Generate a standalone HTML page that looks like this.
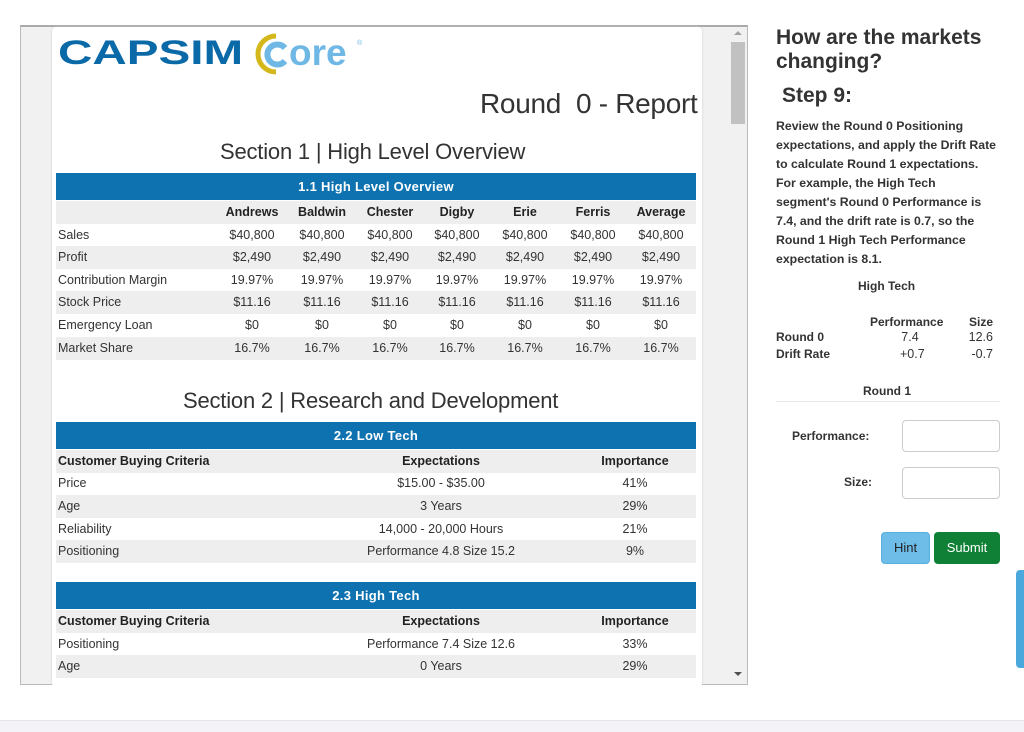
<!DOCTYPE html>
<html><head><style>
*{margin:0;padding:0;box-sizing:border-box}
body{width:1024px;height:732px;background:#fff;font-family:"Liberation Sans",sans-serif;color:#333;position:relative;overflow:hidden}
.a{position:absolute}
.frame{left:20px;top:25px;width:728px;height:660px;border:1px solid #bbb;border-top:2px solid #aaa;background:#f1f1f1;overflow:hidden}
.card{left:52px;top:27px;width:650px;height:660px;background:#fff;border-radius:4px;box-shadow:0 0 2px #ccc}
.bar{position:absolute;left:56px;width:640px;background:#0e72b0;color:#fff;font-weight:bold;font-size:13px;text-align:center;letter-spacing:.3px}
.row{position:absolute;left:56px;width:640px;height:22.7px;font-size:12.5px;line-height:22.7px}
.g{background:#eee}
.row span{position:absolute;top:0}
.c{transform:translateX(-50%);white-space:nowrap}
.h{font-weight:bold;color:#222}
.r{font-size:12px;font-weight:bold;line-height:19px;color:#333;white-space:nowrap}
</style></head><body>
<div class="a frame"></div>
<div class="a card"></div>
<div class="a" style="left:730px;top:27px;width:17px;height:657px;background:#f1f1f1"></div>
<div class="a" style="left:731px;top:42px;width:14px;height:82px;background:#c1c1c1"></div>
<div class="a" style="left:734px;top:31px;width:0;height:0;border-left:4px solid transparent;border-right:4px solid transparent;border-bottom:4px solid #a3a3a3"></div>
<div class="a" style="left:734px;top:672px;width:0;height:0;border-left:4px solid transparent;border-right:4px solid transparent;border-top:4px solid #505050"></div>
<div class="a" style="left:0;top:720px;width:1024px;height:12px;background:#f4f4f8;border-top:1px solid #e4e4ea"></div>
<div class="a" style="left:1016px;top:570px;width:10px;height:98px;background:#4aa8dc;border-radius:4px 0 0 4px"></div>

<div class="a" style="left:58px;top:33px;font-size:34px;font-weight:900;color:#0a6aa8;transform:scaleX(1.4);transform-origin:0 0;line-height:40px">CAPSIM</div>
<svg class="a" style="left:252px;top:33px" width="44" height="42"><path d="M24 3 A18 18 0 1 0 24 39" fill="none" stroke="#d4b71a" stroke-width="5"/><path d="M33 15 A10 10 0 1 0 33 28" fill="none" stroke="#6fb8e6" stroke-width="6"/></svg>
<div class="a" style="left:289px;top:31px;font-size:37px;color:#6fb8e6;font-weight:bold;line-height:44px">ore</div>
<div class="a" style="left:357px;top:40px;font-size:7px;color:#6fb8e6">®</div>

<div class="a" style="left:480px;top:88px;font-size:28px;color:#333;letter-spacing:-0.3px">Round&nbsp; 0 - Report</div>
<div class="a" style="left:220px;top:139px;font-size:22px;color:#333;letter-spacing:-0.2px">Section 1 | High Level Overview</div>
<div class="bar" style="top:173px;height:27px;line-height:27px">1.1 High Level Overview</div>

<div class="row g h" style="top:201px"><span class="c" style="left:196px">Andrews</span><span class="c" style="left:266px">Baldwin</span><span class="c" style="left:334px">Chester</span><span class="c" style="left:401px">Digby</span><span class="c" style="left:469px">Erie</span><span class="c" style="left:537px">Ferris</span><span class="c" style="left:605px">Average</span></div>
<div class="row" style="top:224px"><span style="left:2px">Sales</span><span class="c" style="left:196px">$40,800</span><span class="c" style="left:266px">$40,800</span><span class="c" style="left:334px">$40,800</span><span class="c" style="left:401px">$40,800</span><span class="c" style="left:469px">$40,800</span><span class="c" style="left:537px">$40,800</span><span class="c" style="left:605px">$40,800</span></div>
<div class="row g" style="top:246px"><span style="left:2px">Profit</span><span class="c" style="left:196px">$2,490</span><span class="c" style="left:266px">$2,490</span><span class="c" style="left:334px">$2,490</span><span class="c" style="left:401px">$2,490</span><span class="c" style="left:469px">$2,490</span><span class="c" style="left:537px">$2,490</span><span class="c" style="left:605px">$2,490</span></div>
<div class="row" style="top:269px"><span style="left:2px">Contribution Margin</span><span class="c" style="left:196px">19.97%</span><span class="c" style="left:266px">19.97%</span><span class="c" style="left:334px">19.97%</span><span class="c" style="left:401px">19.97%</span><span class="c" style="left:469px">19.97%</span><span class="c" style="left:537px">19.97%</span><span class="c" style="left:605px">19.97%</span></div>
<div class="row g" style="top:291px"><span style="left:2px">Stock Price</span><span class="c" style="left:196px">$11.16</span><span class="c" style="left:266px">$11.16</span><span class="c" style="left:334px">$11.16</span><span class="c" style="left:401px">$11.16</span><span class="c" style="left:469px">$11.16</span><span class="c" style="left:537px">$11.16</span><span class="c" style="left:605px">$11.16</span></div>
<div class="row" style="top:314px"><span style="left:2px">Emergency Loan</span><span class="c" style="left:196px">$0</span><span class="c" style="left:266px">$0</span><span class="c" style="left:334px">$0</span><span class="c" style="left:401px">$0</span><span class="c" style="left:469px">$0</span><span class="c" style="left:537px">$0</span><span class="c" style="left:605px">$0</span></div>
<div class="row g" style="top:337px"><span style="left:2px">Market Share</span><span class="c" style="left:196px">16.7%</span><span class="c" style="left:266px">16.7%</span><span class="c" style="left:334px">16.7%</span><span class="c" style="left:401px">16.7%</span><span class="c" style="left:469px">16.7%</span><span class="c" style="left:537px">16.7%</span><span class="c" style="left:605px">16.7%</span></div>

<div class="a" style="left:183px;top:388px;font-size:22px;color:#333;letter-spacing:-0.2px">Section 2 | Research and Development</div>
<div class="bar" style="top:422px;height:27px;line-height:27px">2.2 Low Tech</div>
<div class="row g h" style="top:450px"><span style="left:2px">Customer Buying Criteria</span><span class="c" style="left:385px">Expectations</span><span class="c" style="left:579px">Importance</span></div>
<div class="row" style="top:472px"><span style="left:2px">Price</span><span class="c" style="left:385px">$15.00 - $35.00</span><span class="c" style="left:579px">41%</span></div>
<div class="row g" style="top:495px"><span style="left:2px">Age</span><span class="c" style="left:385px">3 Years</span><span class="c" style="left:579px">29%</span></div>
<div class="row" style="top:518px"><span style="left:2px">Reliability</span><span class="c" style="left:385px">14,000 - 20,000 Hours</span><span class="c" style="left:579px">21%</span></div>
<div class="row g" style="top:540px"><span style="left:2px">Positioning</span><span class="c" style="left:385px">Performance 4.8 Size 15.2</span><span class="c" style="left:579px">9%</span></div>

<div class="bar" style="top:582px;height:27px;line-height:27px">2.3 High Tech</div>
<div class="row g h" style="top:610px"><span style="left:2px">Customer Buying Criteria</span><span class="c" style="left:385px">Expectations</span><span class="c" style="left:579px">Importance</span></div>
<div class="row" style="top:633px"><span style="left:2px">Positioning</span><span class="c" style="left:385px">Performance 7.4 Size 12.6</span><span class="c" style="left:579px">33%</span></div>
<div class="row g" style="top:655px"><span style="left:2px">Age</span><span class="c" style="left:385px">0 Years</span><span class="c" style="left:579px">29%</span></div>
<div class="a" style="left:20px;top:685px;width:728px;height:35px;background:#fff"></div>

<div class="a" style="left:776px;top:26px;font-size:21px;font-weight:bold;line-height:24px;color:#333">How are the markets<br>changing?</div>
<div class="a" style="left:782px;top:84px;font-size:21px;font-weight:bold;color:#333">Step 9:</div>
<div class="a r" style="left:776px;top:117px;font-size:12.3px">Review the Round 0 Positioning<br>expectations, and apply the Drift Rate<br>to calculate Round 1 expectations.<br>For example, the High Tech<br>segment's Round 0 Performance is<br>7.4, and the drift rate is 0.7, so the<br>Round 1 High Tech Performance<br>expectation is 8.1.</div>
<div class="a r" style="left:858px;top:277px">High Tech</div>
<div class="a r" style="left:870px;top:313px">Performance</div>
<div class="a r" style="left:969px;top:313px">Size</div>
<div class="a r" style="left:776px;top:329px;line-height:17px">Round 0<br>Drift Rate</div>
<div class="a" style="left:900px;top:329px;font-size:12.5px;line-height:17px;text-align:center;width:20px">7.4<br>+0.7</div>
<div class="a" style="left:965px;top:329px;font-size:12.5px;line-height:17px;text-align:right;width:28px">12.6<br>-0.7</div>
<div class="a r" style="left:863px;top:382px">Round 1</div>
<div class="a" style="left:776px;top:401px;width:224px;border-top:1px solid #e8e8e8"></div>
<div class="a r" style="left:792px;top:427px">Performance:</div>
<div class="a" style="left:902px;top:420px;width:98px;height:32px;border:1px solid #ccc;border-radius:4px"></div>
<div class="a r" style="left:844px;top:473px">Size:</div>
<div class="a" style="left:902px;top:467px;width:98px;height:32px;border:1px solid #ccc;border-radius:4px"></div>
<div class="a" style="left:881px;top:532px;width:49px;height:32px;background:#6ebde9;border:1px solid #5aaedd;border-radius:4px;font-size:13px;text-align:center;line-height:30px;color:#222">Hint</div>
<div class="a" style="left:934px;top:532px;width:66px;height:32px;background:#0f8035;border-radius:4px;font-size:13px;text-align:center;line-height:32px;color:#fff">Submit</div>
</body></html>
